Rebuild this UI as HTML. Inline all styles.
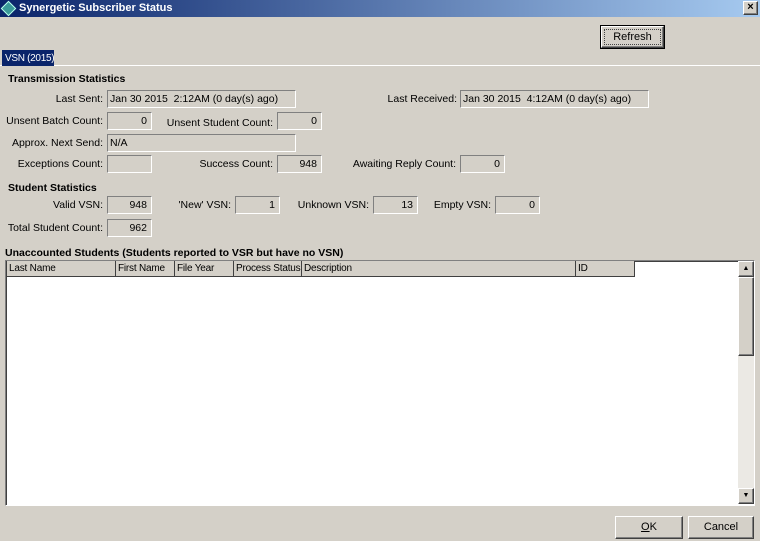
<!DOCTYPE html><html><head><style>
body{margin:0;width:760px;height:541px;background:#d4d0c8;font-family:"Liberation Sans",Arial,sans-serif;font-size:10.5px;color:#000;position:relative;overflow:hidden}
div,span{position:absolute;box-sizing:border-box}
.t{white-space:nowrap;line-height:13px}
.r{text-align:right}
.f{background:#d4d0c8;border-top:1px solid #808080;border-left:1px solid #808080;border-right:1px solid #fff;border-bottom:1px solid #fff;height:18px;line-height:16px;padding:0 4px;white-space:nowrap;font-size:10.5px}
.h{font-weight:bold}
.btn{background:#d4d0c8;border:1px solid;border-color:#fff #404040 #404040 #fff;box-shadow:inset -1px -1px 0 #808080;text-align:center;line-height:20px;font-size:11px}
.col{top:261px;height:16px;border-right:1px solid #404040;border-bottom:1px solid #404040;background:#d4d0c8;padding-left:2px;line-height:15px;white-space:nowrap;overflow:hidden;font-size:10px;letter-spacing:-0.2px}
</style></head><body>
<div style="left:0;top:0;width:760px;height:17px;background:linear-gradient(90deg,#0a246a,#a6caf0)"></div>
<div style="left:3px;top:3px;width:11px;height:11px;background:#3a9a9a;transform:rotate(45deg);border:1px solid #bfe"></div>
<div class="t h" style="left:19px;top:2px;color:#fff;font-size:11px">Synergetic Subscriber Status</div>
<div class="btn" style="left:743px;top:1px;width:15px;height:14px;line-height:11px;font-weight:bold">×</div>
<div style="left:600px;top:25px;width:65px;height:24px;border:1px solid #000"></div>
<div class="btn" style="left:601px;top:26px;width:63px;height:22px;outline:1px dotted #444;outline-offset:-4px">Refresh</div>
<div style="left:0;top:65px;width:760px;height:2px;border-top:1px solid #fff"></div>
<div style="left:2px;top:50px;width:52px;height:16px;background:#0a246a"></div>
<div class="t" style="left:5px;top:52px;color:#fff;font-size:10px;letter-spacing:-0.3px">VSN (2015)</div>
<div class="t h" style="left:8px;top:73px">Transmission Statistics</div>
<div class="t r" style="left:0;top:93px;width:103px">Last Sent:</div>
<div class="f" style="left:107px;top:90px;width:189px;padding-left:2px">Jan 30 2015 &nbsp;2:12AM (0 day(s) ago)</div>
<div class="t r" style="left:300px;top:93px;width:157px">Last Received:</div>
<div class="f" style="left:460px;top:90px;width:189px;padding-left:2px">Jan 30 2015 &nbsp;4:12AM (0 day(s) ago)</div>
<div class="t r" style="left:0;top:115px;width:103px">Unsent Batch Count:</div>
<div class="f r" style="left:107px;top:112px;width:45px">0</div>
<div class="t r" style="left:150px;top:117px;width:123px">Unsent Student Count:</div>
<div class="f r" style="left:277px;top:112px;width:45px">0</div>
<div class="t r" style="left:0;top:137px;width:103px">Approx. Next Send:</div>
<div class="f" style="left:107px;top:134px;width:189px;padding-left:2px">N/A</div>
<div class="t r" style="left:0;top:158px;width:103px">Exceptions Count:</div>
<div class="f" style="left:107px;top:155px;width:45px"></div>
<div class="t r" style="left:150px;top:158px;width:123px">Success Count:</div>
<div class="f r" style="left:277px;top:155px;width:45px">948</div>
<div class="t r" style="left:330px;top:158px;width:126px">Awaiting Reply Count:</div>
<div class="f r" style="left:460px;top:155px;width:45px">0</div>
<div class="t h" style="left:8px;top:182px">Student Statistics</div>
<div class="t r" style="left:0;top:199px;width:103px">Valid VSN:</div>
<div class="f r" style="left:107px;top:196px;width:45px">948</div>
<div class="t r" style="left:150px;top:199px;width:81px">'New' VSN:</div>
<div class="f r" style="left:235px;top:196px;width:45px">1</div>
<div class="t r" style="left:290px;top:199px;width:79px">Unknown VSN:</div>
<div class="f r" style="left:373px;top:196px;width:45px">13</div>
<div class="t r" style="left:420px;top:199px;width:71px">Empty VSN:</div>
<div class="f r" style="left:495px;top:196px;width:45px">0</div>
<div class="t r" style="left:0;top:222px;width:103px">Total Student Count:</div>
<div class="f r" style="left:107px;top:219px;width:45px">962</div>
<div class="t h" style="left:5px;top:247px">Unaccounted Students (Students reported to VSR but have no VSN)</div>
<div style="left:5px;top:260px;width:750px;height:246px;background:#fff;border:1px solid;border-color:#808080 #fff #fff #808080;box-shadow:inset 1px 1px 0 #404040"></div>
<div class="col" style="left:7px;width:109px">Last Name</div>
<div class="col" style="left:116px;width:59px">First Name</div>
<div class="col" style="left:175px;width:59px">File Year</div>
<div class="col" style="left:234px;width:68px">Process Status</div>
<div class="col" style="left:302px;width:274px">Description</div>
<div class="col" style="left:576px;width:59px">ID</div>
<div style="left:738px;top:261px;width:16px;height:243px;background:#ebe9e4"></div>
<div class="btn" style="left:738px;top:261px;width:16px;height:16px;font-size:7px;line-height:14px">▲</div>
<div class="btn" style="left:738px;top:277px;width:16px;height:79px"></div>
<div class="btn" style="left:738px;top:488px;width:16px;height:16px;font-size:7px;line-height:14px">▼</div>
<div class="btn" style="left:615px;top:516px;width:68px;height:23px"><u>O</u>K</div>
<div class="btn" style="left:688px;top:516px;width:66px;height:23px">Cancel</div>
</body></html>
